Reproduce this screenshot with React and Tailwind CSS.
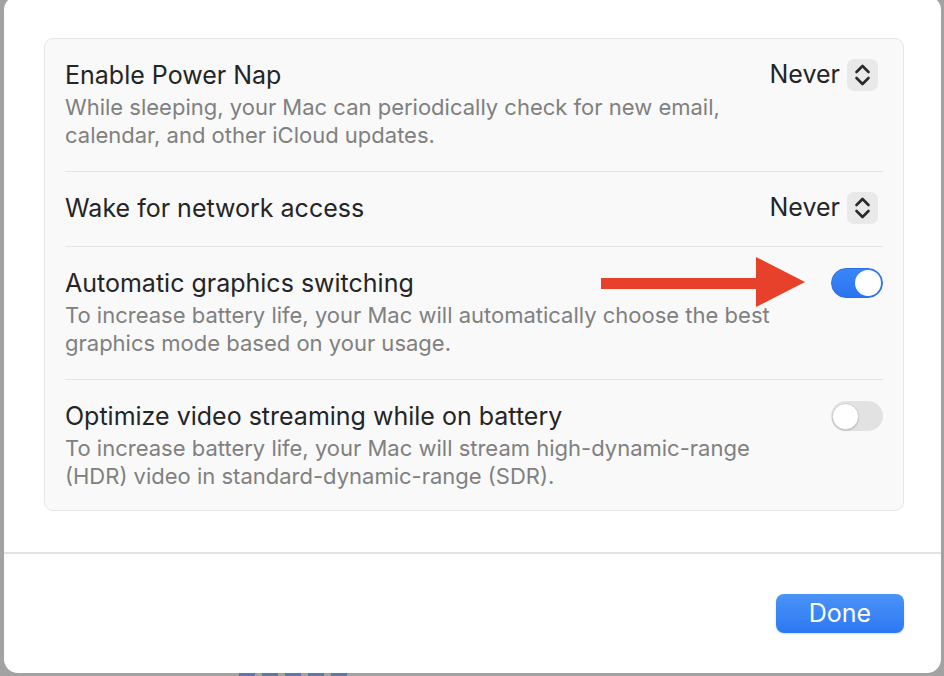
import React from "react";

const font = { fontFamily: "Inter, 'Noto Sans', sans-serif" };

function Stepper() {
  return (
    <div className="w-[31px] h-[32px] rounded-[7px] bg-[#e9e9e9] flex items-center justify-center">
      <svg width="17" height="24" viewBox="0 0 17 24" fill="none">
        <path d="M2.5 9 L8.5 3 L14.5 9" stroke="#2a2a2a" strokeWidth="2.6" strokeLinecap="round" strokeLinejoin="round" />
        <path d="M2.5 15 L8.5 21 L14.5 15" stroke="#2a2a2a" strokeWidth="2.6" strokeLinecap="round" strokeLinejoin="round" />
      </svg>
    </div>
  );
}

function Toggle({ on }) {
  return on ? (
    <div className="w-[52px] h-[30px] rounded-full bg-gradient-to-b from-[#3a86f7] to-[#2a74f0] border border-[#2b6fe0] flex items-center justify-end px-[1px]">
      <div className="w-[26px] h-[26px] rounded-full bg-white" />
    </div>
  ) : (
    <div className="w-[52px] h-[30px] rounded-full bg-[#e2e2e2] flex items-center justify-start px-[1px]">
      <div className="w-[27px] h-[27px] rounded-full bg-white border border-[#cfcfcf] shadow-[0_1px_1px_rgba(0,0,0,0.15)]" />
    </div>
  );
}

function Row({ title, desc, control, children, last }) {
  return (
    <div className="relative">
      <div className={`flex justify-between pt-[19px] ${desc ? "pb-[22px]" : "pb-[21px]"}`}>
        <div>
          <p className="text-[25px] leading-[34px] text-[#252525]">{title}</p>
          {desc && (
            <p className="mt-[1px] text-[22px] leading-[28px] text-[#808080]">
              {desc[0]}
              <br />
              {desc[1]}
            </p>
          )}
        </div>
        <div className="h-[34px] flex items-center">{control}</div>
      </div>
      {!last && <div className="h-[1px] bg-[#e4e4e4]" />}
      {children}
    </div>
  );
}

function App() {
  return (
    <div className="w-[944px] h-[676px] bg-[#a2a2a2] overflow-hidden flex flex-col pl-[4px] pr-[3px]" style={font}>
      <div className="-mt-[4px] h-[677px] bg-white rounded-[14px] flex flex-col">
        {/* CARD */}
        <div className="ml-[40px] mt-[42px] w-[860px] h-[473px] bg-[#f9f9f9] border border-[#e6e6e6] rounded-[9px] px-[20px]">
          <Row
            title="Enable Power Nap"
            desc={["While sleeping, your Mac can periodically check for new email,", "calendar, and other iCloud updates."]}
            control={
              <div className="flex items-center gap-[7px] mr-[5px]">
                <span className="text-[25px] text-[#252525]">Never</span>
                <Stepper />
              </div>
            }
          />
          <Row
            title="Wake for network access"
            control={
              <div className="flex items-center gap-[7px] mr-[5px]">
                <span className="text-[25px] text-[#252525]">Never</span>
                <Stepper />
              </div>
            }
          />
          <Row
            title="Automatic graphics switching"
            desc={["To increase battery life, your Mac will automatically choose the best", "graphics mode based on your usage."]}
            control={<Toggle on />}
          >
            {/* ANNOTATION ARROW */}
            <svg className="absolute left-[536px] top-[10px]" width="204" height="50" viewBox="0 0 204 50">
              <rect x="0" y="21" width="157" height="11" fill="#e8412b" />
              <polygon points="155,0 204,25 155,50" fill="#e8412b" />
            </svg>
          </Row>
          <Row
            title="Optimize video streaming while on battery"
            desc={["To increase battery life, your Mac will stream high-dynamic-range", "(HDR) video in standard-dynamic-range (SDR)."]}
            control={<Toggle />}
            last
          />
        </div>

        {/* FOOTER */}
        <div className="mt-[41px] h-[2px] bg-[#e3e3e3]" />
        <div className="flex justify-end pr-[37px] pt-[40px]">
          <button className="w-[128px] h-[39px] rounded-[8px] bg-gradient-to-b from-[#4a93f8] to-[#2c78f4] text-white text-[25px] shadow-[0_1px_2px_rgba(0,0,0,0.15)]">
            Done
          </button>
        </div>
      </div>

      {/* DOCK STRIP */}
      <div className="flex gap-[7px] pl-[235px] h-[3px]">
        <div className="w-[16px] bg-[#5b78a8]" />
        <div className="w-[16px] bg-[#5b78a8]" />
        <div className="w-[16px] bg-[#5b78a8]" />
        <div className="w-[16px] bg-[#5b78a8]" />
        <div className="w-[16px] bg-[#5b78a8]" />
      </div>
    </div>
  );
}

export default App;
